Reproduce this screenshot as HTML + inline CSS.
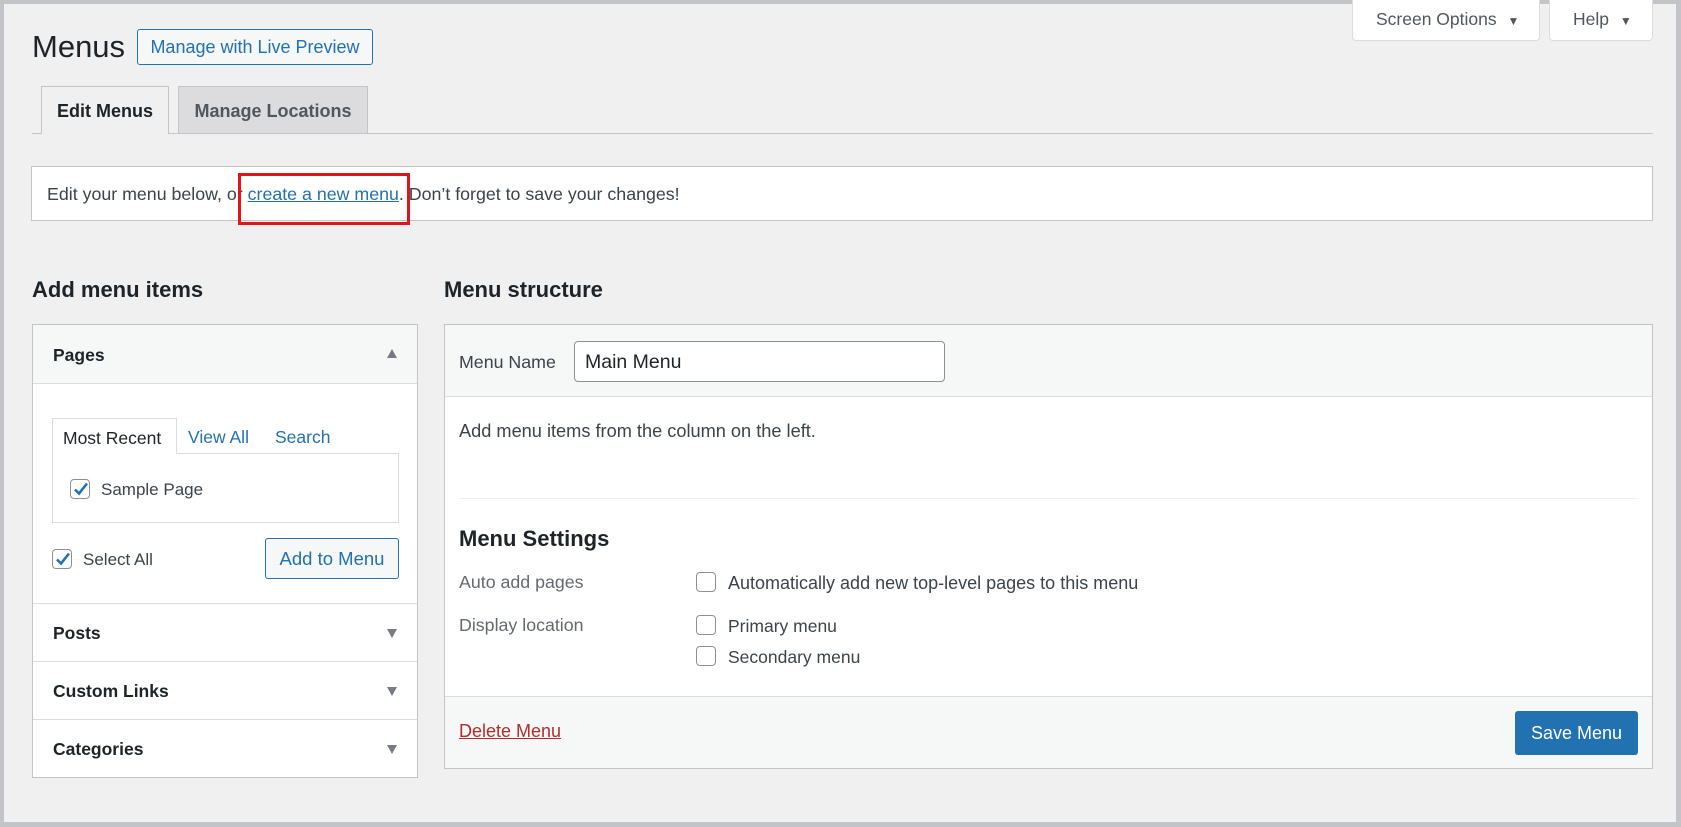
<!DOCTYPE html>
<html><head><meta charset="utf-8"><style>
*{box-sizing:border-box;margin:0;padding:0}
body{width:1681px;height:827px;overflow:hidden;background:#f0f0f1;font-family:"Liberation Sans",sans-serif;color:#3c434a;font-size:17.5px;position:relative}
.frame{position:absolute;left:0;top:0;width:1681px;height:827px;border:4px solid #c3c4c7;border-right-width:5px;border-bottom-width:5px}
.a{position:absolute}
.btn{position:absolute;border:1px solid #2271b1;color:#2271b1;background:#f6f7f7;border-radius:3px;display:flex;align-items:center;justify-content:center;font-size:18.5px}
.cb{position:absolute;width:20px;height:20px;border:1px solid #8c8f94;border-radius:4px;background:#fff}
.cb svg{position:absolute;left:1px;top:0}
.row{position:absolute;left:0;right:0;height:58px;border-top:1px solid #dcdcde;background:#fff}
.row b{position:absolute;left:20px;top:19px;font-size:17.5px;color:#1d2327}
.tri{position:absolute;right:20px;top:25px;width:0;height:0;border-left:5px solid transparent;border-right:5px solid transparent;border-top:9px solid #787c82}
</style></head><body>
<div class="frame"></div>
<div class="a" style="left:32px;top:29px;font-size:31px;color:#1d2327">Menus</div>
<div class="btn" style="left:137px;top:29px;width:236px;height:36px;font-size:18px">Manage with Live Preview</div>
<div class="a" style="left:1352px;top:0;width:188px;height:41px;background:#fff;border:1px solid #dcdcde;border-top:none;border-radius:0 0 4px 4px;font-size:17.5px;color:#50575e;padding:9px 0 0 23px">Screen Options <span style="font-size:12px;margin-left:6px">▼</span></div>
<div class="a" style="left:1549px;top:0;width:104px;height:41px;background:#fff;border:1px solid #dcdcde;border-top:none;border-radius:0 0 4px 4px;font-size:17.5px;color:#50575e;padding:9px 0 0 23px">Help <span style="font-size:12px;margin-left:6px">▼</span></div>
<div class="a" style="left:32px;top:133px;width:1621px;height:1px;background:#c3c4c7"></div>
<div class="a" style="left:41px;top:86px;width:128px;height:48px;background:#f0f0f1;border:1px solid #c3c4c7;border-bottom:none;font-size:18px;font-weight:bold;color:#1d2327;text-align:center;padding-top:14px">Edit Menus</div>
<div class="a" style="left:178px;top:86px;width:190px;height:47px;background:#dcdcde;border:1px solid #c3c4c7;border-bottom:none;font-size:18px;font-weight:bold;color:#50575e;text-align:center;padding-top:14px">Manage Locations</div>
<div class="a" style="left:31px;top:166px;width:1622px;height:55px;background:#fff;border:1px solid #c3c4c7"></div>
<div class="a" style="left:47px;top:184px;font-size:17.8px;color:#3c434a">Edit your menu below, or <span style="color:#2271b1;text-decoration:underline">create a new menu</span>. Don’t forget to save your changes!</div>
<div class="a" style="left:238px;top:173px;width:172px;height:52px;border:3px solid #e0141b"></div>
<div class="a" style="left:32px;top:277px;font-size:22px;font-weight:bold;color:#1d2327">Add menu items</div>
<div class="a" style="left:444px;top:277px;font-size:22px;font-weight:bold;color:#1d2327">Menu structure</div>
<div class="a" style="left:32px;top:324px;width:386px;height:454px;border:1px solid #c3c4c7;background:#fff;overflow:hidden">
 <div style="position:absolute;left:0;right:0;top:0;height:59px;background:#f6f7f7;border-bottom:1px solid #dcdcde"></div>
 <b style="position:absolute;left:20px;top:20px;font-size:17.5px;color:#1d2327">Pages</b>
 <div style="position:absolute;right:20px;top:24px;width:0;height:0;border-left:5px solid transparent;border-right:5px solid transparent;border-bottom:9px solid #787c82"></div>
 <div style="position:absolute;left:19px;top:128px;width:347px;height:70px;border:1px solid #dcdcde"></div>
 <div style="position:absolute;left:19px;top:93px;width:125px;height:36px;border:1px solid #dcdcde;border-bottom:1px solid #fff;background:#fff;font-size:17.5px;color:#1d2327;padding:9px 0 0 10px">Most Recent</div>
 <div style="position:absolute;left:155px;top:102px;font-size:17.5px;color:#2271b1">View All</div>
 <div style="position:absolute;left:242px;top:102px;font-size:17.5px;color:#2271b1">Search</div>
 <div class="cb" style="left:37px;top:154px"><svg width="18" height="18" viewBox="0 0 18 18"><path d="M3 9.5l4 4 8-10" stroke="#2271b1" stroke-width="2.6" fill="none"/></svg></div>
 <div style="position:absolute;left:68px;top:155px;font-size:17px">Sample Page</div>
 <div class="cb" style="left:19px;top:224px"><svg width="18" height="18" viewBox="0 0 18 18"><path d="M3 9.5l4 4 8-10" stroke="#2271b1" stroke-width="2.6" fill="none"/></svg></div>
 <div style="position:absolute;left:50px;top:225px;font-size:17px">Select All</div>
 <div class="btn" style="left:232px;top:213px;width:134px;height:41px">Add to Menu</div>
 <div class="row" style="top:278px"><b>Posts</b><div class="tri"></div></div>
 <div class="row" style="top:336px"><b>Custom Links</b><div class="tri"></div></div>
 <div class="row" style="top:394px"><b>Categories</b><div class="tri"></div></div>
</div>
<div class="a" style="left:444px;top:324px;width:1209px;height:445px;border:1px solid #c3c4c7;background:#fff">
 <div style="position:absolute;left:0;right:0;top:0;height:72px;background:#f6f7f7;border-bottom:1px solid #dcdcde"></div>
 <div style="position:absolute;left:14px;top:27px;font-size:17.8px">Menu Name</div>
 <div style="position:absolute;left:129px;top:16px;width:371px;height:41px;border:1px solid #8c8f94;border-radius:4px;background:#fff;font-size:19.5px;color:#1d2327;padding:9px 0 0 10px">Main Menu</div>
 <div style="position:absolute;left:14px;top:96px;font-size:18.2px">Add menu items from the column on the left.</div>
 <div style="position:absolute;left:14px;right:14px;top:173px;height:1px;background:#f0f0f1"></div>
 <div style="position:absolute;left:14px;top:201px;font-size:22px;font-weight:bold;color:#1d2327">Menu Settings</div>
 <div style="position:absolute;left:14px;top:247px;font-size:17.8px;color:#646970">Auto add pages</div>
 <div style="position:absolute;left:14px;top:290px;font-size:17.8px;color:#646970">Display location</div>
 <div class="cb" style="left:251px;top:247px"></div>
 <div style="position:absolute;left:283px;top:248px;font-size:18px">Automatically add new top-level pages to this menu</div>
 <div class="cb" style="left:251px;top:290px"></div>
 <div style="position:absolute;left:283px;top:291px;font-size:17.5px">Primary menu</div>
 <div class="cb" style="left:251px;top:321px"></div>
 <div style="position:absolute;left:283px;top:322px;font-size:17.5px">Secondary menu</div>
 <div style="position:absolute;left:0;right:0;top:371px;bottom:0;background:#f6f7f7;border-top:1px solid #dcdcde"></div>
 <div style="position:absolute;left:14px;top:396px;font-size:18px;color:#b32d2e;text-decoration:underline">Delete Menu</div>
 <div style="position:absolute;left:1070px;top:386px;width:123px;height:44px;background:#2271b1;border-radius:3px;color:#fff;font-size:18px;text-align:center;padding-top:12px">Save Menu</div>
</div>
</body></html>
